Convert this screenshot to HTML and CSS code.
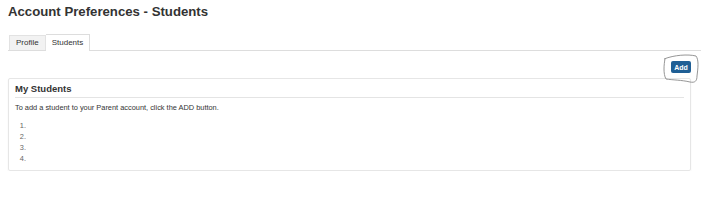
FILE: index.html
```html
<!DOCTYPE html>
<html lang="en">
<head>
    <meta charset="UTF-8">
    <title>Account Preferences - Students</title>
    <link rel="stylesheet" href="styles.css">
</head>
<body>
    <h1 class="page-title">Account Preferences - Students</h1>

    <div class="tabs">
        <div class="tab">Profile</div>
        <div class="tab active">Students</div>
    </div>

    <div class="toolbar">
        <span class="add-wrap">
            <button class="add-btn">Add</button>
            <svg class="scribble" width="38" height="30" viewBox="0 0 38 30">
                <path d="M2 5 C12 1, 26 0, 34 2 C37 6, 36 14, 35 22 C35 27, 33 29, 28 28 C20 26, 10 26, 4 25 C1 20, 2 10, 3 5" fill="none" stroke="#8a8a8a" stroke-width="0.9"/>
            </svg>
        </span>
    </div>

    <div class="panel">
        <h2 class="panel-title">My Students</h2>
        <p class="hint">To add a student to your Parent account, click the ADD button.</p>
        <ol class="students">
            <li></li>
            <li></li>
            <li></li>
            <li></li>
        </ol>
    </div>
</body>
</html>
```

FILE: styles.css
```css
body {
    font-family: "Liberation Sans", Arial, sans-serif;
    margin: 0;
    padding: 0 10px 0 8px;
    background-color: #fff;
    color: #333;
}
.page-title {
    font-size: 13.2px;
    font-weight: bold;
    margin: 0;
    padding-top: 3px;
    line-height: 18px;
}
.tabs {
    display: flex;
    align-items: flex-end;
    margin: 13px -10px 0 0;
    padding-left: 1px;
    border-bottom: 1px solid #ddd;
    height: 16px;
}
.tab {
    font-size: 8px;
    padding: 0 6px;
    line-height: 14px;
    background-color: #f2f2f2;
    border: 1px solid #e2e2e2;
    border-bottom: none;
}
.tab.active {
    background-color: #fff;
    border-color: #ddd;
    border-left: none;
    line-height: 15px;
    margin-bottom: -1px;
    padding-bottom: 1px;
}
.toolbar {
    display: flex;
    justify-content: flex-end;
    height: 27px;
}
.add-wrap {
    position: relative;
    margin-top: 10px;
}
.add-btn {
    display: block;
    font-family: "Liberation Sans", Arial, sans-serif;
    font-size: 7px;
    font-weight: bold;
    color: #fff;
    background-color: #1f5f95;
    border: none;
    border-radius: 2px;
    padding: 0;
    width: 20px;
    height: 12px;
}
.scribble {
    position: absolute;
    left: -9px;
    top: -7px;
}
.panel {
    border: 1px solid #e6e6e6;
    box-shadow: 0 1px 2px rgba(0, 0, 0, 0.06);
    border-radius: 2px;
    padding: 3px 6px 8px 6px;
    height: 80px;
}
.panel-title {
    font-size: 9.5px;
    font-weight: bold;
    margin: 0;
    line-height: 13px;
    padding-bottom: 2px;
    border-bottom: 1px solid #e4e4e4;
}
.hint {
    font-size: 7.4px;
    margin: 5px 0 7px 0;
    line-height: 10px;
}
.students {
    margin: 0;
    padding-left: 13px;
    font-size: 7.4px;
    line-height: 11px;
    color: #666;
}
.students li {
    height: 11px;
}
```
